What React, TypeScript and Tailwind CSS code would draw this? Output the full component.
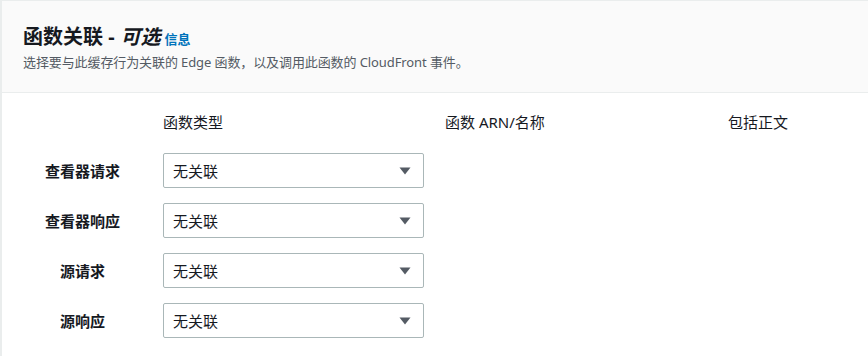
import React from "react";

const rows = ["查看器请求", "查看器响应", "源请求", "源响应"];

function Select() {
  return (
    <div className="flex h-[35px] w-[261px] items-center justify-between rounded-[2px] border border-[#aab7b8] bg-white pl-[9px] pr-[12px]">
      <span className="text-[15px] leading-[20px] text-[#16191f]">无关联</span>
      <svg width="12" height="8" viewBox="0 0 12 8">
        <path d="M0.5 0.5 L11.5 0.5 L6 7.5 Z" fill="#545b64" />
      </svg>
    </div>
  );
}

export default function App() {
  return (
    <div
      className="h-[356px] w-[868px] border-l-2 border-t border-[#eaeded] bg-white"
      style={{ fontFamily: '"Noto Sans", "Noto Sans CJK SC", sans-serif' }}
    >
      <div className="h-[92px] border-b border-[#eaeded] bg-[#fafafa] pl-[21px] pt-[22px]">
        <div className="flex items-baseline text-[20px] font-bold leading-[28px] text-[#16191f]">
          <span>函数关联 - </span>
          <span className="ml-[6px] italic">可选</span>
          <span className="ml-[4px] text-[13px] font-bold text-[#0073bb]">信息</span>
        </div>
        <div className="mt-0 text-[13px] leading-[18px] tracking-[-0.1px] text-[#545b64]">
          选择要与此缓存行为关联的 Edge 函数，以及调用此函数的 CloudFront 事件。
        </div>
      </div>
      <div className="grid grid-cols-[161px_282px_283px_1fr] gap-y-[15px] pt-[19px]">
        <div />
        <div className="mb-[6px] text-[15px] leading-[20px] text-[#16191f]">函数类型</div>
        <div className="mb-[6px] text-[15px] leading-[20px] text-[#16191f]">函数 ARN/名称</div>
        <div className="mb-[6px] text-[15px] leading-[20px] text-[#16191f]">包括正文</div>
        {rows.map((r) => (
          <React.Fragment key={r}>
            <div className="flex items-center justify-center text-[15px] font-bold leading-[20px] text-[#16191f]">
              {r}
            </div>
            <div>
              <Select />
            </div>
            <div />
            <div />
          </React.Fragment>
        ))}
      </div>
    </div>
  );
}
